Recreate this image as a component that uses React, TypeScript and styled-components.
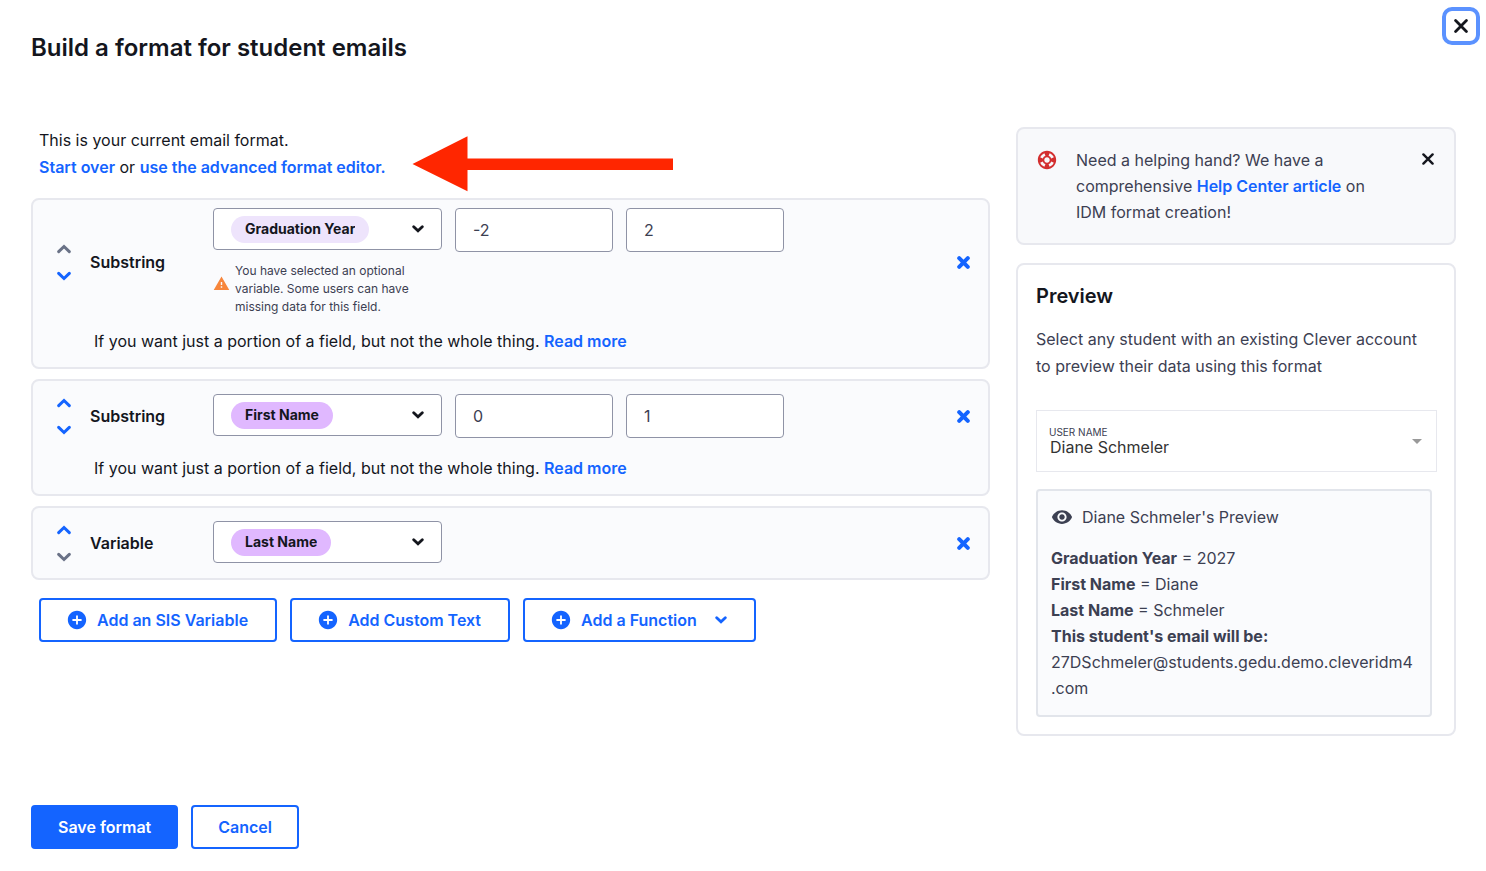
import React from "react";
import styled, { createGlobalStyle } from "styled-components";
import { MdAddCircle, MdSupport, MdVisibility, MdWarning } from "react-icons/md";

const ink = "#14161d";
const body = "#3c4052";
const blue = "#1464ff";
const line = "#e7e8ee";
const field = "#8f93a6";
const muted = "#6a7287";

const GlobalStyle = createGlobalStyle`
  *, *::before, *::after { box-sizing: border-box; }
  body {
    margin: 0;
    background: #fff;
    color: ${ink};
    font: 400 16px/26px Inter, "Liberation Sans", sans-serif;
  }
  h1, h2, p, ul { margin: 0; padding: 0; }
  button, input, select { font: inherit; color: inherit; }
  button { cursor: pointer; }
  svg { display: block; flex: none; }
`;

const Page = styled.div`
  display: flex;
  flex-direction: column;
`;

const Header = styled.header`
  display: flex;
  justify-content: space-between;
  align-items: flex-start;
  padding: 7px 6px 63px 31px;
`;

const Title = styled.h1`
  margin-top: 25px;
  font-size: 24px;
  line-height: 32px;
  font-weight: 600;
`;

const CloseDialog = styled.button`
  display: grid;
  place-items: center;
  width: 38px;
  height: 38px;
  padding: 0;
  background: #fff;
  border: 4px solid #5b92ff;
  border-radius: 10px;
`;

const Content = styled.div`
  display: grid;
  grid-template-columns: minmax(0, 1fr) 440px;
  gap: 26px;
  padding: 0 30px 0 31px;
`;

const Editor = styled.main``;

const Intro = styled.div`
  position: relative;
  padding-left: 8px;
  margin-bottom: 17px;
  line-height: 27px;
`;

const Arrow = styled.svg`
  position: absolute;
  top: 9px;
  left: 381px;
`;

const TextLink = styled.a`
  color: ${blue};
  font-weight: 600;
  text-decoration: none;
`;

const Rows = styled.ul`
  display: flex;
  flex-direction: column;
  gap: 10px;
  list-style: none;
`;

const RowCard = styled.li`
  background: #fafbfd;
  border: 2px solid ${line};
  border-radius: 8px;
`;

const RowMain = styled.div`
  display: flex;
  align-items: center;
  min-height: 70px;
  padding: 8px 18px 8px 24px;
`;

const Reorder = styled.div`
  display: flex;
  flex-direction: column;
  gap: 11px;
`;

const IconButton = styled.button<{ $color?: string }>`
  display: grid;
  place-items: center;
  min-height: 16px;
  padding: 0;
  border: 0;
  background: none;
  color: ${(p) => p.$color ?? ink};
`;

const RowLabel = styled.div`
  width: 142px;
  padding-left: 19px;
  font-weight: 600;
  flex: none;
`;

const Fields = styled.div`
  display: flex;
  align-items: flex-start;
  gap: 13px;
  flex: 1;
  min-height: 44px;
`;

const Picker = styled.div`
  width: 229px;
  flex: none;
`;

const PickerBox = styled.label`
  display: flex;
  align-items: center;
  justify-content: space-between;
  height: 42px;
  padding: 0 17px;
  background: #fff;
  border: 1px solid ${field};
  border-radius: 4px;
`;

const PillSelect = styled.select<{ $soft?: boolean }>`
  appearance: none;
  field-sizing: content;
  height: 27px;
  padding: 0 14px;
  border: 0;
  border-radius: 14px;
  background: ${(p) => (p.$soft ? "#eee4fc" : "#e0b8ff")};
  font-size: 14px;
  font-weight: 700;
`;

const Warning = styled.p`
  display: flex;
  align-items: center;
  gap: 5px;
  margin-top: 12px;
  font-size: 12px;
  line-height: 18px;
  color: ${body};
  svg {
    margin-bottom: 12px;
    color: #f7863c;
  }
`;

const NumberField = styled.input`
  width: 158px;
  height: 44px;
  padding: 0 17px;
  background: #fff;
  border: 1px solid ${field};
  border-radius: 4px;
  color: ${body};
`;

const Hint = styled.p`
  padding: 4px 18px 13px 61px;
`;

const Button = styled.button<{ $primary?: boolean }>`
  display: flex;
  align-items: center;
  gap: 9px;
  height: 44px;
  padding: 0 25px;
  border: 2px solid ${blue};
  border-radius: 4px;
  background: ${(p) => (p.$primary ? blue : "#fff")};
  color: ${(p) => (p.$primary ? "#fff" : blue)};
  font-weight: 600;
`;

const Actions = styled.div`
  display: flex;
  gap: 13px;
  padding: 18px 0 0 8px;
  ${Button} { padding-right: 27px; }
`;

const MenuChevron = styled.span`
  padding-left: 9px;
`;

const Aside = styled.aside`
  display: flex;
  flex-direction: column;
  gap: 18px;
`;

const Panel = styled.section<{ $tinted?: boolean }>`
  border: 2px solid ${line};
  border-radius: 8px;
  padding: 17px;
  background: ${(p) => (p.$tinted ? "#f8f9fb" : "#fff")};
  color: ${body};
`;

const Help = styled.div`
  display: flex;
  align-items: flex-start;
  padding: 1px 3px 1px 1px;
`;

const HelpIcon = styled.span`
  padding: 2px 0;
  color: #d32f2f;
`;

const HelpText = styled.p`
  flex: 1;
  padding: 0 32px 0 18px;
`;

const HelpClose = styled(IconButton)`
  height: 24px;
`;

const PanelTitle = styled.h2`
  color: ${ink};
  font-size: 20px;
  line-height: 28px;
  font-weight: 600;
`;

const PanelText = styled.p`
  margin: 16px 0 30px;
  padding-right: 12px;
  line-height: 27px;
`;

const PreviewBody = styled.div`
  padding-left: 1px;
`;

const UserPicker = styled.div`
  display: flex;
  align-items: center;
  height: 62px;
  padding: 0 14px 0 12px;
  border: 1px solid ${line};
`;

const UserField = styled.div`
  display: flex;
  flex-direction: column;
  flex: 1;
`;

const UserLabel = styled.label`
  font-size: 10px;
  line-height: 11px;
`;

const UserSelect = styled.select`
  appearance: none;
  width: 100%;
  height: 18px;
  padding: 0 0 0 1px;
  border: 0;
  background: none;
  line-height: 18px;
  color: #333;
`;

const Result = styled.div`
  margin: 17px 5px 0 0;
  padding: 13px 13px 14px;
  background: #fafbfd;
  border: 2px solid #e2e5eb;
  border-radius: 4px;
  overflow-wrap: anywhere;
`;

const ResultTitle = styled.p`
  display: flex;
  align-items: center;
  gap: 9px;
  margin-bottom: 15px;
`;

const Footer = styled.footer`
  display: flex;
  gap: 13px;
  padding: 69px 31px 22px;
`;

function Chevron({ up, small }: { up?: boolean; small?: boolean }) {
  return small ? (
    <svg width="12" height="8" viewBox="0 0 12 8" fill="none" stroke="currentColor" strokeWidth="2.8" strokeLinecap="round" aria-hidden="true">
      <path d="M1.7 1.7 6 5.8 10.3 1.7" />
    </svg>
  ) : (
    <svg width="14" height="10" viewBox="0 0 14 10" fill="none" stroke="currentColor" strokeWidth="3" strokeLinecap="round" aria-hidden="true">
      <path d={up ? "M1.7 7.6 7 2.5 12.3 7.6" : "M1.7 2.4 7 7.5 12.3 2.4"} />
    </svg>
  );
}

function Cross({ size, weight }: { size: number; weight: number }) {
  const a = weight / 2 + 0.2;
  const b = size - a;
  return (
    <svg width={size} height={size} viewBox={`0 0 ${size} ${size}`} fill="none" stroke="currentColor" strokeWidth={weight} strokeLinecap="round" aria-hidden="true">
      <path d={`M${a} ${a} ${b} ${b} M${b} ${a} ${a} ${b}`} />
    </svg>
  );
}

type RowData = {
  kind: string;
  variable: string;
  soft?: boolean;
  range?: [string, string];
  first?: boolean;
  last?: boolean;
};

const rows: RowData[] = [
  { kind: "Substring", variable: "Graduation Year", soft: true, range: ["-2", "2"], first: true },
  { kind: "Substring", variable: "First Name", range: ["0", "1"] },
  { kind: "Variable", variable: "Last Name", last: true },
];

const variables = ["Graduation Year", "First Name", "Last Name"];

function FormatRow({ kind, variable, soft, range, first, last }: RowData) {
  return (
    <RowCard>
      <RowMain>
        <Reorder>
          <IconButton type="button" aria-label="Move up" $color={first ? muted : blue}>
            <Chevron up />
          </IconButton>
          <IconButton type="button" aria-label="Move down" $color={last ? muted : blue}>
            <Chevron />
          </IconButton>
        </Reorder>
        <RowLabel>{kind}</RowLabel>
        <Fields>
          <Picker>
            <PickerBox>
              <PillSelect $soft={soft} defaultValue={variable} aria-label={`${kind} field`}>
                {variables.map((v) => (
                  <option key={v}>{v}</option>
                ))}
              </PillSelect>
              <Chevron small />
            </PickerBox>
            {soft && (
              <Warning>
                <MdWarning size={17} />
                You have selected an optional variable. Some users can have missing data for this field.
              </Warning>
            )}
          </Picker>
          {range && (
            <>
              <NumberField defaultValue={range[0]} aria-label="Start" />
              <NumberField defaultValue={range[1]} aria-label="End" />
            </>
          )}
        </Fields>
        <IconButton type="button" aria-label="Remove" $color={blue}>
          <Cross size={13} weight={4} />
        </IconButton>
      </RowMain>
      {range && (
        <Hint>
          If you want just a portion of a field, but not the whole thing. <TextLink href="#substring">Read more</TextLink>
        </Hint>
      )}
    </RowCard>
  );
}

export default function App() {
  return (
    <Page>
      <GlobalStyle />
      <Header>
        <Title>Build a format for student emails</Title>
        <CloseDialog type="button" aria-label="Close">
          <Cross size={14} weight={2.8} />
        </CloseDialog>
      </Header>
      <Content>
        <Editor>
          <Intro>
            <p>This is your current email format.</p>
            <p>
              <TextLink href="#start">Start over</TextLink> or <TextLink href="#advanced">use the advanced format editor.</TextLink>
            </p>
            <Arrow width="262" height="56" viewBox="0 0 262 56" fill="#ff2600" aria-hidden="true">
              <path d="M0.5 28 55.5 0.3V22.5H261V34H55.5V55.3Z" />
            </Arrow>
          </Intro>
          <Rows>
            {rows.map((r) => (
              <FormatRow key={r.variable} {...r} />
            ))}
          </Rows>
          <Actions>
            <Button type="button">
              <MdAddCircle size={22} />
              Add an SIS Variable
            </Button>
            <Button type="button">
              <MdAddCircle size={22} />
              Add Custom Text
            </Button>
            <Button type="button">
              <MdAddCircle size={22} />
              Add a Function
              <MenuChevron>
                <Chevron small />
              </MenuChevron>
            </Button>
          </Actions>
        </Editor>
        <Aside>
          <Panel $tinted>
            <Help>
              <HelpIcon>
                <MdSupport size={22} />
              </HelpIcon>
              <HelpText>
                Need a helping hand? We have a comprehensive <TextLink href="#help">Help Center article</TextLink> on IDM format creation!
              </HelpText>
              <HelpClose type="button" aria-label="Dismiss">
                <Cross size={12} weight={2.4} />
              </HelpClose>
            </Help>
          </Panel>
          <Panel>
            <PreviewBody>
              <PanelTitle>Preview</PanelTitle>
              <PanelText>Select any student with an existing Clever account to preview their data using this format</PanelText>
              <UserPicker>
                <UserField>
                  <UserLabel htmlFor="user">USER NAME</UserLabel>
                  <UserSelect id="user">
                    <option>Diane Schmeler</option>
                  </UserSelect>
                </UserField>
                <svg width="10" height="5" viewBox="0 0 10 5" fill="#999" aria-hidden="true">
                  <path d="M0 0H10L5 5Z" />
                </svg>
              </UserPicker>
              <Result>
                <ResultTitle>
                  <MdVisibility size={22} />
                  Diane Schmeler's Preview
                </ResultTitle>
                <p><strong>Graduation Year</strong> = 2027</p>
                <p><strong>First Name</strong> = Diane</p>
                <p><strong>Last Name</strong> = Schmeler</p>
                <p><strong>This student's email will be:</strong></p>
                <p>27DSchmeler@students.gedu.demo.cleveridm4<wbr />.com</p>
              </Result>
            </PreviewBody>
          </Panel>
        </Aside>
      </Content>
      <Footer>
        <Button type="button" $primary>Save format</Button>
        <Button type="button">Cancel</Button>
      </Footer>
    </Page>
  );
}
